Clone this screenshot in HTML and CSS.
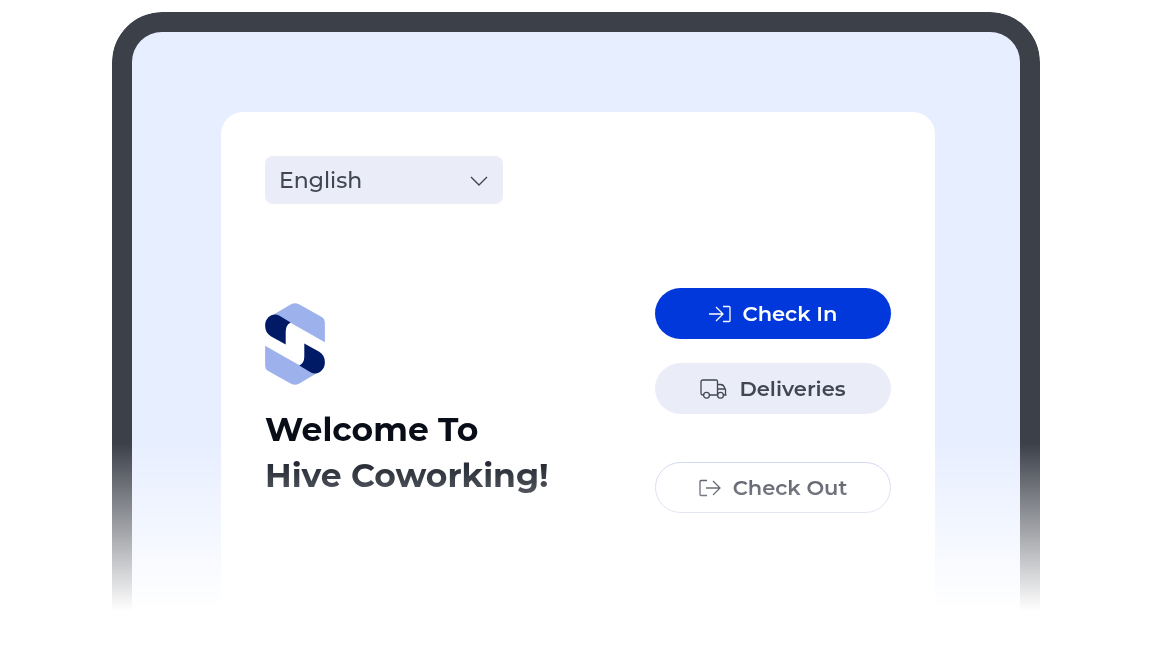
FILE: index.html
```html
<!DOCTYPE html>
<html lang="en">
<head>
<meta charset="utf-8">
<meta name="viewport" content="width=device-width, initial-scale=1">
<title>Hive Coworking</title>
<link rel="stylesheet" href="styles.css">
</head>
<body>
<div class="device">
  <main class="card">
    <div class="language">
      <select class="language-select" aria-label="Language">
        <option>English</option>
      </select>
      <svg class="language-chevron" viewBox="0 0 18 10" aria-hidden="true"><path d="M1 1l8 8 8-8"/></svg>
    </div>
    <div class="content">
      <section class="welcome">
        <svg class="logo" viewBox="0 0 180 247" role="img" aria-label="Hive logo">
          <defs>
            <g id="half">
              <path class="logo-light" d="M22 37L78 4Q90 -3 102 4L172 43Q180 48 180 58V118L70 56Z"/>
              <path class="logo-dark" d="M42 38L77 59Q62 66 62 86V125L17 100Q0 90 0 68C0 44 23 28 42 38Z"/>
            </g>
          </defs>
          <use href="#half"/>
          <use href="#half" transform="rotate(180 90 123.5)"/>
        </svg>
        <h1 class="title">
          <span class="title-line">Welcome To</span>
          <span class="title-line">Hive Coworking!</span>
        </h1>
      </section>
      <div class="actions">
        <button class="button button-primary" type="button">
          <svg class="icon icon-arrow" viewBox="0 0 22 18" aria-hidden="true"><path d="M0 9h14M7 2l7 7-7 7M14 1.500h6q1 0 1 1v13q0 1-1 1h-6"/></svg>
          Check In
        </button>
        <button class="button button-soft" type="button">
          <svg class="icon icon-truck" viewBox="0 0 27 20" aria-hidden="true"><path d="M3.500 16H3q-2 0-2-2V3q0-2 2-2h13q1.500 0 1.500 1.500V16M9.500 16h8M17.500 5.500h3q3 0 4 3l1 2v5.500M17.500 10h8M23.500 16h3"/><circle cx="6.500" cy="16.300" r="2.900"/><circle cx="20.500" cy="16.300" r="2.900"/></svg>
          Deliveries
        </button>
        <button class="button button-outline" type="button">
          <svg class="icon icon-arrow" viewBox="0 0 22 18" aria-hidden="true"><path d="M8 1.500H2q-1 0-1 1v13q0 1 1 1h6M7 9h14M14 2l7 7-7 7"/></svg>
          Check Out
        </button>
      </div>
    </div>
  </main>
</div>
</body>
</html>
```
FILE: styles.css
```css
* {
  box-sizing: border-box;
}

body {
  margin: 0;
  padding: 12px 24px 36px;
  background: #fff;
  font-family: Montserrat, Inter, sans-serif;
}

.device {
  max-width: 928px;
  margin: 0 auto;
  padding: 80px 85px 0 89px;
  border: 20px solid #3c4049;
  border-bottom: 0;
  border-radius: 50px 50px 0 0;
  background: #e7eeff;
  -webkit-mask-image: linear-gradient(#000 calc(100% - 168px), transparent);
  mask-image: linear-gradient(#000 calc(100% - 168px), transparent);
}

.card {
  padding: 44px 44px 98px;
  border-radius: 22px 22px 0 0;
  background: #fff;
}

.language {
  position: relative;
  width: 238px;
  max-width: 100%;
}

.language-select {
  display: block;
  width: 100%;
  height: 48px;
  padding: 2px 48px 0 14px;
  border: 0;
  border-radius: 8px;
  appearance: none;
  background: #eaedf8;
  color: #424654;
  font: 500 22px/28px Montserrat, Inter, sans-serif;
}

.language-chevron {
  position: absolute;
  top: 20px;
  right: 15px;
  width: 18px;
  height: 10px;
  fill: none;
  stroke: #424654;
  stroke-width: 1.4;
  pointer-events: none;
}

.content {
  display: flex;
  flex-wrap: wrap;
  justify-content: space-between;
  gap: 32px;
  margin-top: 84px;
}

.welcome {
  padding-top: 15px;
}

.logo {
  display: block;
  width: 60px;
  height: 82px;
}

.logo-light {
  fill: #9db2ed;
}

.logo-dark {
  fill: #001a66;
}

.title {
  margin: 21px 0 0;
  color: #080d18;
  font-size: 33px;
  font-weight: 700;
  line-height: 46px;
}

.title-line {
  display: block;
}

.actions {
  display: flex;
  flex-direction: column;
  gap: 24px;
  width: 236px;
}

.button {
  display: flex;
  align-items: center;
  justify-content: center;
  gap: 12px;
  height: 51px;
  padding: 1px 6px 0;
  border: 0;
  border-radius: 26px;
  font: 600 21px/28px Montserrat, Inter, sans-serif;
}

.button-primary {
  background: #0038db;
  color: #fff;
}

.button-soft {
  background: #eaedf8;
  color: #424654;
}

.button-outline {
  margin-top: 24px;
  border: 1px solid #ced5ec;
  background: #fff;
  color: #363a48;
}

.icon {
  flex: none;
  fill: none;
  stroke: currentColor;
  stroke-width: 1.3;
  stroke-linejoin: round;
}

.icon-arrow {
  width: 22px;
  height: 18px;
}

.icon-truck {
  width: 27px;
  height: 20px;
}
```
